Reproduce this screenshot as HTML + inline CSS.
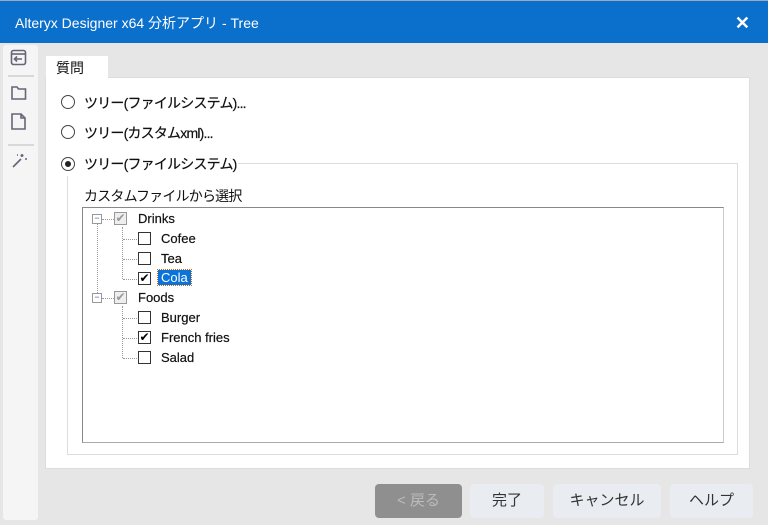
<!DOCTYPE html>
<html><head><meta charset="utf-8"><style>
*{margin:0;padding:0;box-sizing:border-box}
body{width:768px;height:525px;background:#e6e6e6;font-family:"Liberation Sans","Noto Sans CJK JP",sans-serif;position:relative;overflow:hidden;color:#222}
.title{position:absolute;left:0;top:0;width:768px;height:43px;background:#0b6fcc;color:#fff;font-size:14px;line-height:45px;padding-left:15px;border-top:1px solid #9ab}
.x{position:absolute;right:18px;top:0;font-size:18px;font-weight:bold}
.side{position:absolute;left:3px;top:45px;width:35px;height:475px;background:#f5f5f5;border-radius:3px}
.ab{position:absolute}
.panel{position:absolute;left:45px;top:77px;width:705px;height:392px;background:#fff;border:1px solid #ddd}
.tab{position:absolute;left:46px;top:56px;width:62px;height:22px;background:#fff;font-size:14px;padding:2px 0 0 10px;color:#111}
.radio{position:absolute;left:61px;width:14px;height:14px;border:1.5px solid #444;border-radius:50%;background:#fff}
.rl{position:absolute;left:84px;font-size:14px;letter-spacing:-.8px;color:#111;-webkit-text-stroke:.2px #111}
.group{position:absolute;left:67px;top:163px;width:671px;height:292px;border:1px solid #ddd}
.tree{position:absolute;left:82px;top:207px;width:642px;height:236px;border:1px solid #888;border-right-color:#ccc;border-bottom-color:#aaa}
.cb{position:absolute;width:13px;height:13px;border:1px solid #333;background:#fff;font-size:12px;line-height:11px;text-align:center;color:#000}
.cb.g{border-color:#999;color:#999;background:#eee}
.t{position:absolute;font-size:13px;color:#111;-webkit-text-stroke:.2px #111}
.dot{position:absolute;border-color:#999;border-style:dotted;border-width:0}
.btn{position:absolute;top:484px;height:34px;background:#e9ecf0;border-radius:4px;font-size:15px;text-align:center;line-height:34px;color:#333}
</style></head><body>
<div class="title">Alteryx Designer x64 分析アプリ - Tree<span class="x">✕</span></div>
<div class="side">
<svg width="35" height="130" viewBox="0 0 35 130" style="position:absolute;left:0;top:0" fill="none" stroke="#667" stroke-width="1.6">
<rect x="8.5" y="5.5" width="14" height="14" rx="2"/><line x1="8.5" y1="9" x2="22.5" y2="9"/><path d="M19 14h-7M14 11.5l-2.5 2.5 2.5 2.5"/>
<line x1="5" y1="31" x2="31" y2="31" stroke="#bbb" stroke-width="1"/>
<path d="M9 42h5l1.5 2h7v10h-13.5z"/>
<path d="M9 69h9l4 4v11h-13z M18 69v4h4"/>
<line x1="5" y1="100" x2="31" y2="100" stroke="#bbb" stroke-width="1"/>
<path d="M10 122l8-8M19 109v3M17.5 110.5h3M22 114h2M14 110h1"/>
</svg></div>
<div class="panel"></div>
<div class="tab">質問</div>
<div class="radio" style="top:95px"></div><div class="rl" style="top:93px">ツリー(ファイルシステム)...</div>
<div class="radio" style="top:125px"></div><div class="rl" style="top:123px">ツリー(カスタムxml)...</div>
<div class="group"></div>
<div class="ab" style="left:58px;top:150px;width:180px;height:26px;background:#fff"></div>
<div class="radio" style="top:157px"></div><div class="ab" style="left:65px;top:161px;width:6px;height:6px;border-radius:50%;background:#222"></div>
<div class="rl" style="top:154px">ツリー(ファイルシステム)</div>
<div class="ab" style="left:84px;top:186px;font-size:14px;letter-spacing:-.8px;color:#111">カスタムファイルから選択</div>
<div class="tree"></div>
<div class="dot" style="left:97px;top:224px;height:75px;border-left-width:1px"></div>
<div class="dot" style="left:102px;top:219px;width:12px;border-top-width:1px"></div>
<div class="dot" style="left:102px;top:298px;width:12px;border-top-width:1px"></div>
<div class="dot" style="left:122px;top:227px;height:52px;border-left-width:1px"></div>
<div class="dot" style="left:122px;top:306px;height:52px;border-left-width:1px"></div>
<div class="ab" style="left:92px;top:214px;width:10px;height:10px;border:1px solid #999;background:#fff;font-size:9px;line-height:7px;text-align:center;color:#36c">−</div>
<div class="ab" style="left:92px;top:293px;width:10px;height:10px;border:1px solid #999;background:#fff;font-size:9px;line-height:7px;text-align:center;color:#36c">−</div>
<div class="cb g" style="left:114px;top:212px">✔</div><div class="t" style="left:138px;top:211px">Drinks</div>
<div class="cb g" style="left:114px;top:291px">✔</div><div class="t" style="left:138px;top:290px">Foods</div>
<div class="dot" style="left:123px;top:239px;width:14px;border-top-width:1px"></div>
<div class="dot" style="left:123px;top:259px;width:14px;border-top-width:1px"></div>
<div class="dot" style="left:123px;top:279px;width:14px;border-top-width:1px"></div>
<div class="dot" style="left:123px;top:318px;width:14px;border-top-width:1px"></div>
<div class="dot" style="left:123px;top:338px;width:14px;border-top-width:1px"></div>
<div class="dot" style="left:123px;top:358px;width:14px;border-top-width:1px"></div>
<div class="cb" style="left:138px;top:232px"></div><div class="t" style="left:161px;top:231px">Cofee</div>
<div class="cb" style="left:138px;top:252px"></div><div class="t" style="left:161px;top:251px">Tea</div>
<div class="cb" style="left:138px;top:272px">✔</div><div class="t" style="left:158px;top:270px;background:#0a74da;color:#fff;-webkit-text-stroke:0;padding:0 3px;outline:1px dotted #c60">Cola</div>
<div class="cb" style="left:138px;top:311px"></div><div class="t" style="left:161px;top:310px">Burger</div>
<div class="cb" style="left:138px;top:331px">✔</div><div class="t" style="left:161px;top:330px">French fries</div>
<div class="cb" style="left:138px;top:351px"></div><div class="t" style="left:161px;top:350px">Salad</div>
<div class="btn" style="left:375px;width:87px;background:#8f8f8f;color:#bbb">&lt; 戻る</div>
<div class="btn" style="left:470px;width:74px">完了</div>
<div class="btn" style="left:553px;width:108px">キャンセル</div>
<div class="btn" style="left:670px;width:83px">ヘルプ</div>
</body></html>
